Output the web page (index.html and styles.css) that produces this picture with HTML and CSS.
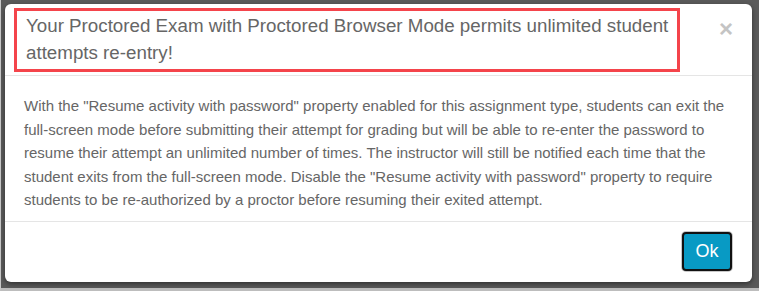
FILE: index.html
```html
<!DOCTYPE html>
<html>
<head>
<meta charset="utf-8">
<link rel="stylesheet" href="styles.css">
</head>
<body>
<div class="backdrop">
  <div class="modal">
    <div class="modal-header">
      <h4 class="title">Your Proctored Exam with Proctored Browser Mode permits unlimited student attempts re-entry!</h4>
      <button class="close" aria-label="Close">&times;</button>
    </div>
    <div class="modal-body">
      <p>With the "Resume activity with password" property enabled for this assignment type, students can exit the full-screen mode before submitting their attempt for grading but will be able to re-enter the password to resume their attempt an unlimited number of times. The instructor will still be notified each time that the student exits from the full-screen mode. Disable the "Resume activity with password" property to require students to be re-authorized by a proctor before resuming their exited attempt.</p>
    </div>
    <div class="modal-footer">
      <button class="btn-ok">Ok</button>
    </div>
  </div>
</div>
</body>
</html>
```
FILE: styles.css
```css
html, body {
  margin: 0;
  padding: 0;
  width: 759px;
  height: 291px;
  overflow: hidden;
}
body {
  background: #5a5a5a;
  font-family: Arial, "Liberation Sans", sans-serif;
}
.backdrop {
  padding: 4px 7px 0 4px;
  border-left: 1px solid #c9c9c9;
  border-bottom: 3px solid #bdbdbd;
  box-sizing: border-box;
  height: 291px;
}
.modal {
  background: #fff;
  border-radius: 6px;
  height: 278px;
  display: flex;
  flex-direction: column;
  box-shadow: 0 2px 5px rgba(0,0,0,0.45);
}
.modal-header {
  display: flex;
  align-items: flex-start;
  padding: 4px 19px 0 9px;
  height: 72px;
  box-sizing: border-box;
  border-bottom: 1px solid #e5e5e5;
}
.title {
  margin: 0;
  flex: 0 0 666px;
  box-sizing: border-box;
  height: 64px;
  border: 3px solid #f4444b;
  padding: 1px 0 0 9px;
  font-family: Arial, "Liberation Sans", sans-serif;
  font-size: 18.75px;
  font-weight: normal;
  line-height: 27px;
  color: #666;
}
.close {
  margin-left: auto;
  margin-top: 9px;
  background: none;
  border: 0;
  padding: 0;
  font-family: Arial, "Liberation Sans", sans-serif;
  font-size: 24px;
  font-weight: bold;
  line-height: 1;
  color: #c4c4c4;
}
.modal-body {
  padding: 18px 18px 9px 19px;
  border-bottom: 1px solid #e5e5e5;
}
.modal-body p {
  margin: 0;
  font-family: Arial, "Liberation Sans", sans-serif;
  font-size: 15px;
  line-height: 23.6px;
  color: #666;
}
.modal-footer {
  flex: 1;
  display: flex;
  justify-content: flex-end;
  align-items: flex-start;
  padding: 10px 20px 0 0;
}
.btn-ok {
  width: 50px;
  height: 39px;
  background: #089ac4;
  color: #fff;
  border: 2px solid #111;
  border-radius: 4px;
  box-shadow: 0 0 0 1px #c8c8c8;
  font-family: Arial, "Liberation Sans", sans-serif;
  font-size: 18px;
  padding: 0;
}
```
